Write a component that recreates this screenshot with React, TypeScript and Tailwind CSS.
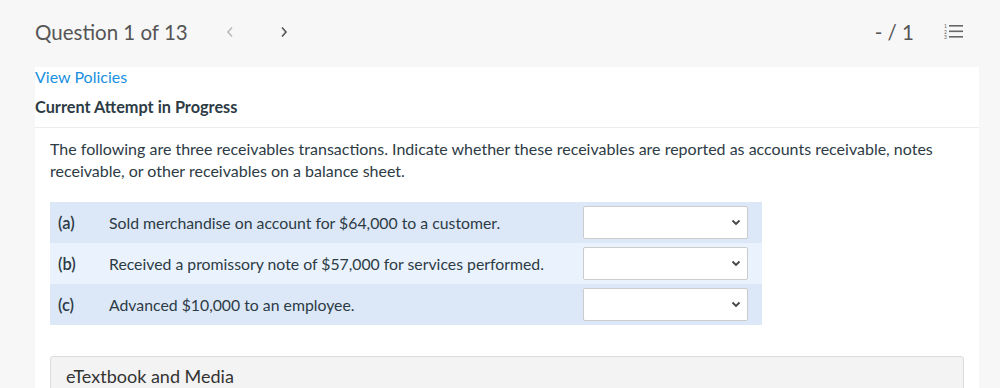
import React from "react";

const rows = [
  { l: "(a)", t: "Sold merchandise on account for $64,000 to a customer.", bg: "bg-[#dce8f8]" },
  { l: "(b)", t: "Received a promissory note of $57,000 for services performed.", bg: "bg-[#eaf3fd]" },
  { l: "(c)", t: "Advanced $10,000 to an employee.", bg: "bg-[#dce8f8]" },
];

function Chevron({ color }: { color: string }) {
  return (
    <svg width="8" height="12" viewBox="0 0 8 12" fill="none">
      <path d="M2 1.5 L6 6 L2 10.5" stroke={color} strokeWidth="1.6" />
    </svg>
  );
}

export default function App() {
  return (
    <div className="w-[1000px] h-[388px] overflow-hidden bg-[#f7f7f7] font-['Lato','Open_Sans',sans-serif] text-[#2d3b45]">
      <div className="h-[67px] flex items-center pl-[35px] pr-[37px] pb-[4px]">
        <span className="text-[20.5px] text-[#555] leading-[24px]">Question 1 of 13</span>
        <span className="ml-[38px] flex items-center rotate-180">
          <Chevron color="#bbb" />
        </span>
        <span className="ml-[46px] flex items-center">
          <Chevron color="#555" />
        </span>
        <span className="ml-auto text-[20.5px] text-[#555] leading-[24px]">- / 1</span>
        <span className="ml-[30px] flex items-center">
          <svg width="19" height="17" viewBox="0 0 19 17">
            <text x="0" y="5" fontSize="5" fill="#666" fontFamily="Lato">1</text>
            <text x="0" y="10.5" fontSize="5" fill="#666" fontFamily="Lato">2</text>
            <text x="0" y="16" fontSize="5" fill="#666" fontFamily="Lato">3</text>
            <rect x="5" y="2" width="14" height="1.6" fill="#666" />
            <rect x="5" y="7.5" width="14" height="1.6" fill="#666" />
            <rect x="5" y="13" width="14" height="1.6" fill="#666" />
          </svg>
        </span>
      </div>
      <div className="ml-[35px] w-[944px] bg-white h-[321px]">
        <div className="h-[61px] border-b border-[#ececec]">
          <div className="text-[16px] text-[#1a8fe0] leading-[20px]">View Policies</div>
          <div className="text-[16.3px] font-bold text-[#2d3b45] leading-[20px] mt-[10px]">Current Attempt in Progress</div>
        </div>
        <div className="px-[15px]">
          <p className="text-[16px] leading-[22px] text-[#2d3b45] mt-[10px] pr-[20px]">
            The following are three receivables transactions. Indicate whether these receivables are reported as accounts receivable, notes receivable, or other receivables on a balance sheet.
          </p>
          <div className="mt-[20px] w-[712px]">
            {rows.map((r) => (
              <div key={r.l} className={`${r.bg} h-[41px] flex items-center text-[15.8px]`}>
                <span className="w-[59px] pl-[8px] pt-[1px] font-semibold text-[16.5px]">{r.l}</span>
                <span className="flex-1">{r.t}</span>
                <div className="w-[165px] h-[33px] mr-[14px] bg-white border border-[#ccc] rounded-[2px] flex items-center justify-end pr-[6px]">
                  <svg width="10" height="7" viewBox="0 0 10 7">
                    <path d="M1.5 1.5 L5 5 L8.5 1.5" stroke="#444" strokeWidth="1.8" fill="none" />
                  </svg>
                </div>
              </div>
            ))}
          </div>
          <div className="mt-[31px] w-[914px] h-[40px] bg-[#f3f3f3] border border-[#dcdcdc] rounded-[3px] px-[15px] pt-[7px]">
            <span className="text-[18px] text-[#333] leading-[24px]">eTextbook and Media</span>
          </div>
        </div>
      </div>
    </div>
  );
}
